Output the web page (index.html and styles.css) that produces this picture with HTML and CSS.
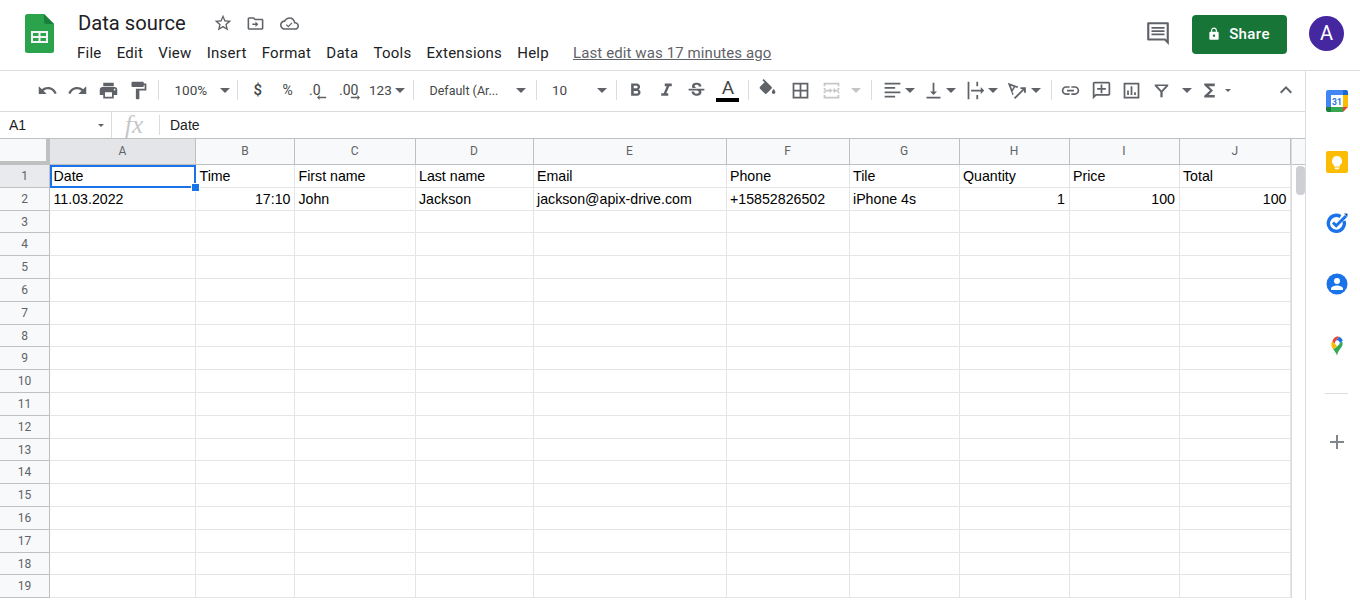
FILE: index.html
```html
<!DOCTYPE html>
<html lang="en">
  <head>
    <meta charset="UTF-8" />
    <title>Data source</title>
    <link rel="stylesheet" href="styles.css">
  </head>
  <body>
    <div class="app">
      <header class="topbar">
        <svg class="logo" viewBox="0 0 29 39">
          <path fill="#2ba24c" d="M2.5 0H19l10 10v26.5a2.500 2.500 0 0 1-2.500 2.500h-24A2.500 2.500 0 0 1 0 36.500v-34A2.500 2.500 0 0 1 2.500 0z"/>
          <path fill="#188038" d="M19 0l10 10H21.500A2.500 2.500 0 0 1 19 7.500z"/>
          <path fill="#f1f3f4" d="M6 17h17v12H6zm2 2v3h5.500v-3zm7.500 0v3H21v-3zM8 24v3h5.500v-3zm7.500 0v3H21v-3z" fill-rule="evenodd"/>
        </svg>
        <div class="doc">
          <div class="doc-title">
            <span class="title">Data source</span>
            <svg class="title-icon star" viewBox="0 0 24 24"><path d="M22 9.240l-7.190-.62L12 2 9.190 8.630 2 9.240l5.460 4.730L5.820 21 12 17.270 18.180 21l-1.630-7.030L22 9.240zM12 15.400l-3.760 2.270 1-4.280-3.320-2.880 4.380-.38L12 6.100l1.710 4.040 4.380.38-3.320 2.880 1 4.280L12 15.400z"/></svg>
            <svg class="title-icon" viewBox="0 0 24 24"><path d="M20 6h-8l-2-2H4c-1.100 0-2 .9-2 2v12c0 1.100.9 2 2 2h16c1.100 0 2-.9 2-2V8c0-1.100-.9-2-2-2zm0 12H4V6h5.170l2 2H20v10zm-8-4H8v-2h4V9.500l3.500 3.500-3.500 3.500V14z"/></svg>
            <svg class="title-icon" viewBox="0 0 24 24"><path d="M19.350 10.040C18.670 6.590 15.640 4 12 4 9.110 4 6.600 5.640 5.350 8.040 2.340 8.360 0 10.910 0 14c0 3.310 2.690 6 6 6h13c2.760 0 5-2.240 5-5 0-2.640-2.050-4.780-4.650-4.960zM19 18H6c-2.210 0-4-1.790-4-4 0-2.050 1.530-3.760 3.560-3.970l1.070-.11.5-.95C8.080 7.140 9.940 6 12 6c2.620 0 4.880 1.860 5.390 4.430l.3 1.500 1.530.11c1.560.1 2.780 1.410 2.780 2.960 0 1.650-1.350 3-3 3zm-8.500-3.200l-2-2-1.100 1.100 3.100 3.100 5.200-5.200-1.100-1.100z"/></svg>
          </div>
          <nav class="menu">
            <span>File</span>
            <span>Edit</span>
            <span>View</span>
            <span>Insert</span>
            <span>Format</span>
            <span>Data</span>
            <span>Tools</span>
            <span>Extensions</span>
            <span>Help</span>
            <a class="last-edit">Last edit was 17 minutes ago</a>
          </nav>
        </div>
        <svg class="comments" viewBox="0 0 24 24"><path d="M21 2H3a1 1 0 0 0-1 1v15a1 1 0 0 0 1 1h15l4 4V3a1 1 0 0 0-1-1zm-1 16.200L18.800 17H4V4h16zM6 6.500h12V8H6zm0 3h12V11H6zm0 3h12V14H6z"/></svg>
        <button class="share">
          <svg viewBox="0 0 24 24"><path d="M18 8h-1V6c0-2.760-2.240-5-5-5S7 3.240 7 6v2H6c-1.100 0-2 .9-2 2v10c0 1.100.9 2 2 2h12c1.100 0 2-.9 2-2V10c0-1.100-.9-2-2-2zm-6 9c-1.100 0-2-.9-2-2s.9-2 2-2 2 .9 2 2-.9 2-2 2zm3.100-9H8.900V6c0-1.710 1.390-3.100 3.100-3.100 1.710 0 3.100 1.390 3.100 3.100v2z"/></svg>
          Share
        </button>
        <div class="avatar">A</div>
      </header>

      <div class="workspace">
        <main class="main">
          <div class="toolbar">
            <span class="tb"><svg viewBox="0 0 24 24"><path d="M12.500 8c-2.650 0-5.050.99-6.900 2.600L2 7v9h9l-3.620-3.620c1.390-1.160 3.160-1.880 5.120-1.880 3.540 0 6.550 2.310 7.600 5.500l2.370-.78C21.080 11.030 17.150 8 12.500 8z"/></svg></span>
            <span class="tb"><svg viewBox="0 0 24 24"><path d="M18.400 10.600C16.550 8.990 14.150 8 11.500 8c-4.650 0-8.580 3.030-9.960 7.220L3.900 16c1.050-3.190 4.050-5.500 7.600-5.500 1.950 0 3.730.72 5.120 1.880L13 16h9V7l-3.600 3.600z"/></svg></span>
            <span class="tb"><svg viewBox="0 0 24 24"><path d="M19 8H5c-1.660 0-3 1.340-3 3v6h4v4h12v-4h4v-6c0-1.660-1.340-3-3-3zm-3 11H8v-5h8v5zm3-7c-.55 0-1-.45-1-1s.45-1 1-1 1 .45 1 1-.45 1-1 1zm-1-9H6v4h12V3z"/></svg></span>
            <span class="tb"><svg viewBox="0 0 24 24"><path d="M18 4V3c0-.55-.45-1-1-1H5c-.55 0-1 .45-1 1v4c0 .55.45 1 1 1h12c.55 0 1-.45 1-1V6h1v4H9v11c0 .55.45 1 1 1h2c.55 0 1-.45 1-1v-9h8V4h-3z"/></svg></span>
            <i class="sep"></i>
            <span class="select select-zoom">100%<b class="caret"></b></span>
            <i class="sep"></i>
            <span class="tb tb-text tb-strong">$</span>
            <span class="tb tb-text">%</span>
            <span class="tb decimal decimal-less">.0<svg viewBox="0 0 12 6"><path d="M0 3l3-3v2h8v2H3v2z"/></svg></span>
            <span class="tb decimal decimal-more">.00<svg viewBox="0 0 12 6"><path d="M12 3L9 0v2H1v2h8v2z"/></svg></span>
            <span class="tb tb-number">123<b class="caret"></b></span>
            <i class="sep"></i>
            <span class="select select-font">Default (Ar...<b class="caret"></b></span>
            <i class="sep"></i>
            <span class="select select-size">10<b class="caret"></b></span>
            <i class="sep"></i>
            <span class="tb"><svg viewBox="0 0 24 24"><path d="M15.600 10.790c.97-.67 1.650-1.770 1.650-2.790 0-2.260-1.750-4-4-4H7v14h7.040c2.090 0 3.710-1.700 3.710-3.790 0-1.520-.86-2.820-2.150-3.420zM10 6.500h3c.83 0 1.500.67 1.500 1.500s-.67 1.500-1.500 1.500h-3v-3zm3.500 9H10v-3h3.500c.83 0 1.500.67 1.500 1.500s-.67 1.500-1.500 1.500z"/></svg></span>
            <span class="tb"><svg viewBox="0 0 24 24"><path d="M10 4v3h2.210l-3.420 8H6v3h8v-3h-2.210l3.420-8H18V4z"/></svg></span>
            <span class="tb"><svg viewBox="0 0 24 24"><path d="M7.240 8.750c-.26-.48-.39-1.030-.39-1.670 0-.61.13-1.160.4-1.670.26-.5.63-.93 1.110-1.290.48-.35 1.050-.63 1.700-.83.66-.19 1.390-.29 2.180-.29.81 0 1.540.11 2.210.34.66.22 1.230.54 1.690.94.47.4.83.88 1.080 1.430.25.55.38 1.150.38 1.810h-3.010c0-.31-.05-.59-.15-.85-.09-.27-.24-.49-.44-.68-.2-.19-.45-.33-.75-.44-.3-.1-.66-.16-1.060-.16-.39 0-.74.04-1.030.13-.29.09-.53.21-.72.36-.19.16-.34.34-.44.55-.1.21-.15.43-.15.66 0 .48.25.88.74 1.210.38.25.77.48 1.410.7H7.390c-.05-.08-.11-.17-.15-.25zM21 12v-2H3v2h9.620c.18.07.4.14.55.2.37.17.66.34.87.51.21.17.35.36.43.57.07.2.11.43.11.69 0 .23-.05.45-.14.66-.09.2-.23.38-.42.53-.19.15-.42.26-.71.35-.29.08-.63.13-1.010.13-.43 0-.83-.04-1.180-.13s-.66-.23-.91-.42c-.25-.19-.45-.44-.59-.75-.14-.31-.25-.76-.25-1.210H6.400c0 .55.08 1.130.24 1.580.16.45.37.85.65 1.210.28.35.6.66.98.92.37.26.78.48 1.220.65.44.17.9.3 1.380.39.48.08.96.13 1.440.13.8 0 1.530-.09 2.180-.28s1.210-.45 1.670-.79c.46-.34.82-.77 1.070-1.270s.38-1.070.38-1.710c0-.6-.1-1.140-.31-1.610-.05-.11-.11-.23-.17-.33H21z"/></svg></span>
            <span class="tb text-color"><span class="text-color-a">A</span><i class="text-color-bar"></i></span>
            <i class="sep"></i>
            <span class="tb tb-fill"><svg viewBox="0 0 24 24"><path d="M16.560 8.940L7.620 0 6.210 1.410l2.380 2.380-5.150 5.150c-.59.59-.59 1.540 0 2.120l5.500 5.500c.29.29.68.44 1.060.44s.77-.15 1.060-.44l5.500-5.500c.59-.58.59-1.530 0-2.120zM19 11.500s-2 2.170-2 3.500c0 1.100.9 2 2 2s2-.9 2-2c0-1.330-2-3.500-2-3.500z"/></svg></span>
            <span class="tb"><svg viewBox="0 0 24 24"><path d="M3 3v18h18V3H3zm8 16H5v-6h6v6zm0-8H5V5h6v6zm8 8h-6v-6h6v6zm0-8h-6V5h6v6z"/></svg></span>
            <span class="tb tb-merge">
              <svg class="muted" viewBox="0 0 24 24"><path d="M3 3h18v4h-2V5H5v2H3zm0 14h2v2h14v-2h2v4H3zM3 9h2v2H3zm0 4h2v2H3zm16-4h2v2h-2zm0 4h2v2h-2zM4 11h6V9l3 3-3 3v-2H4zm16 0h-4V9l-3 3 3 3v-2h4z"/></svg>
              <b class="caret caret-muted"></b>
            </span>
            <i class="sep"></i>
            <span class="tb-drop"><svg viewBox="0 0 24 24"><path d="M3 3h18v2H3zm0 5h12v2H3zm0 5h18v2H3zm0 5h12v2H3z"/></svg><b class="caret"></b></span>
            <span class="tb-drop"><svg viewBox="0 0 24 24"><path d="M16 13h-3V3h-2v10H8l4 4 4-4zM4 19v2h16v-2H4z"/></svg><b class="caret"></b></span>
            <span class="tb-drop"><svg viewBox="0 0 24 24"><path d="M3 2h2v20H3zm10 0h2v5h-2zm0 15h2v5h-2zM7 11h11V8l4 4-4 4v-3H7z"/></svg><b class="caret"></b></span>
            <span class="tb-drop tb-drop-last"><svg viewBox="0 0 24 24"><path d="M2 3l12 4.500-1 1.700-2.600-1-3.200 5.400 1.500 2.200-1.100 1.800zm3.500 3.600l1.400 4.100 1.900-3.100zM9 20.300l10.100-10.100-2.600 0V8.300H22.700v6.200h-2.200l0-2.700L10.500 21.800z"/></svg><b class="caret"></b></span>
            <i class="sep"></i>
            <span class="tb"><svg viewBox="0 0 24 24"><path d="M3.900 12c0-1.710 1.390-3.100 3.100-3.100h4V7H7c-2.760 0-5 2.240-5 5s2.240 5 5 5h4v-1.900H7c-1.710 0-3.100-1.390-3.100-3.100zM8 13h8v-2H8v2zm9-6h-4v1.900h4c1.710 0 3.100 1.390 3.100 3.100s-1.390 3.100-3.100 3.100h-4V17h4c2.760 0 5-2.240 5-5s-2.240-5-5-5z"/></svg></span>
            <span class="tb"><svg viewBox="0 0 24 24"><path d="M20 2H4c-1.100 0-2 .9-2 2v18l4-4h14c1.100 0 2-.9 2-2V4c0-1.100-.9-2-2-2zm0 14H5.170L4 17.170V4h16v12zM13 5h-2v4H7v2h4v4h2v-4h4V9h-4z"/></svg></span>
            <span class="tb"><svg viewBox="0 0 24 24"><path d="M3 3v18h18V3H3zm16 16H5V5h14v14zM7 12h2v5H7zm4-5h2v10h-2zm4 7h2v3h-2z"/></svg></span>
            <span class="tb-drop tb-filter"><svg viewBox="-2 -2 28 28"><path d="M3 4h18v2l-7.500 8v7h-3v-7L3 6zm3.500 2l5.500 6 5.500-6z"/></svg><b class="caret"></b></span>
            <span class="tb-drop tb-sum"><svg viewBox="0 0 24 24"><path d="M18 4H6v2l6.500 6L6 18v2h12v-3h-7l5-5-5-5h7z"/></svg><b class="caret caret-small"></b></span>
            <span class="tb tb-collapse"><svg viewBox="0 0 24 24"><path d="M12 8l-6 6 1.410 1.410L12 10.830l4.590 4.580L18 14z"/></svg></span>
          </div>

          <div class="formula-bar">
            <span class="name-box">A1<b class="caret caret-small"></b></span>
            <span class="fx">fx</span>
            <span class="formula">Date</span>
          </div>

          <div class="sheet">
            <div class="cells">
              <div class="row col-head">
                <div class="corner"></div>
                <div class="active">A</div><div>B</div><div>C</div><div>D</div><div>E</div><div>F</div><div>G</div><div>H</div><div>I</div><div>J</div>
              </div>
              <div class="row">
                <div class="row-num active">1</div>
                <div>Date</div><div>Time</div><div>First name</div><div>Last name</div><div>Email</div><div>Phone</div><div>Tile</div><div>Quantity</div><div>Price</div><div>Total</div>
              </div>
              <div class="row">
                <div class="row-num">2</div>
                <div>11.03.2022</div><div class="num">17:10</div><div>John</div><div>Jackson</div><div>jackson@apix-drive.com</div><div>+15852826502</div><div>iPhone 4s</div><div class="num">1</div><div class="num">100</div><div class="num">100</div>
              </div>
              <div class="row"><div class="row-num">3</div><div></div><div></div><div></div><div></div><div></div><div></div><div></div><div></div><div></div><div></div></div>
              <div class="row"><div class="row-num">4</div><div></div><div></div><div></div><div></div><div></div><div></div><div></div><div></div><div></div><div></div></div>
              <div class="row"><div class="row-num">5</div><div></div><div></div><div></div><div></div><div></div><div></div><div></div><div></div><div></div><div></div></div>
              <div class="row"><div class="row-num">6</div><div></div><div></div><div></div><div></div><div></div><div></div><div></div><div></div><div></div><div></div></div>
              <div class="row"><div class="row-num">7</div><div></div><div></div><div></div><div></div><div></div><div></div><div></div><div></div><div></div><div></div></div>
              <div class="row"><div class="row-num">8</div><div></div><div></div><div></div><div></div><div></div><div></div><div></div><div></div><div></div><div></div></div>
              <div class="row"><div class="row-num">9</div><div></div><div></div><div></div><div></div><div></div><div></div><div></div><div></div><div></div><div></div></div>
              <div class="row"><div class="row-num">10</div><div></div><div></div><div></div><div></div><div></div><div></div><div></div><div></div><div></div><div></div></div>
              <div class="row"><div class="row-num">11</div><div></div><div></div><div></div><div></div><div></div><div></div><div></div><div></div><div></div><div></div></div>
              <div class="row"><div class="row-num">12</div><div></div><div></div><div></div><div></div><div></div><div></div><div></div><div></div><div></div><div></div></div>
              <div class="row"><div class="row-num">13</div><div></div><div></div><div></div><div></div><div></div><div></div><div></div><div></div><div></div><div></div></div>
              <div class="row"><div class="row-num">14</div><div></div><div></div><div></div><div></div><div></div><div></div><div></div><div></div><div></div><div></div></div>
              <div class="row"><div class="row-num">15</div><div></div><div></div><div></div><div></div><div></div><div></div><div></div><div></div><div></div><div></div></div>
              <div class="row"><div class="row-num">16</div><div></div><div></div><div></div><div></div><div></div><div></div><div></div><div></div><div></div><div></div></div>
              <div class="row"><div class="row-num">17</div><div></div><div></div><div></div><div></div><div></div><div></div><div></div><div></div><div></div><div></div></div>
              <div class="row"><div class="row-num">18</div><div></div><div></div><div></div><div></div><div></div><div></div><div></div><div></div><div></div><div></div></div>
              <div class="row"><div class="row-num">19</div><div></div><div></div><div></div><div></div><div></div><div></div><div></div><div></div><div></div><div></div></div>
              <div class="selection"><i class="handle"></i></div>
            </div>
            <div class="vscroll"><div class="vscroll-head"></div><div class="thumb"></div></div>
          </div>
        </main>

        <aside class="side">
          <svg class="side-icon" viewBox="0 0 22 22">
            <path fill="#fff" d="M5 5h12v12H5z"/>
            <path fill="#4285f4" d="M2 0h15v5H5v12H0V2a2 2 0 0 1 2-2z"/>
            <path fill="#1967d2" d="M17 0h3a2 2 0 0 1 2 2v3h-5z"/>
            <path fill="#fbbc04" d="M17 5h5v12h-5z"/>
            <path fill="#34a853" d="M5 17h12v5H5z"/>
            <path fill="#188038" d="M0 17h5v5H2a2 2 0 0 1-2-2z"/>
            <path fill="#ea4335" d="M17 17h5l-5 5z"/>
            <text class="cal-text" x="11" y="14.500" text-anchor="middle">31</text>
          </svg>
          <svg class="side-icon" viewBox="0 0 22 22">
            <rect width="22" height="22" rx="2" fill="#fbbc04"/>
            <path fill="#fff" d="M11 5a5 5 0 0 0-3 9v1.500h6V14a5 5 0 0 0-3-9zM8.500 16.500h5a2.500 2 0 0 1-5 0z"/>
          </svg>
          <svg class="side-icon" viewBox="0 0 22 22">
            <path fill="none" stroke="#1a73e8" stroke-width="3.400" d="M18 9a8 8 0 1 1-3.500-4.500"/>
            <path fill="none" stroke="#1a73e8" stroke-width="3" d="M7 10.500l3.200 3.200L20 4"/>
            <path fill="#174ea6" d="M18 1.500h3.500V5z"/>
          </svg>
          <svg class="side-icon" viewBox="0 0 22 22">
            <circle cx="11" cy="11" r="10.500" fill="#1a73e8"/>
            <circle cx="11" cy="8" r="3" fill="#fff"/>
            <path fill="#fff" d="M5 15.500c0-2 4-3 6-3s6 1 6 3V17H5z"/>
          </svg>
          <svg class="side-icon" viewBox="0 0 22 22">
            <path fill="#34a853" d="M11 21.500c-1-3-2.600-4.600-3.800-6l3.800-3 5-5c.4.7.6 1.500.6 2.300 0 2.800-1.700 4-3 5.900-1 1.300-1.900 2.800-2.600 5.800z"/>
            <path fill="#fbbc04" d="M5.300 10c0 2.400 1 3.700 1.900 5.500L11 12l-4.600-4.800c-.7.800-1.100 1.800-1.100 2.800z"/>
            <path fill="#1a73e8" d="M13 2.800L9.800 6.800a2.500 2.500 0 0 1 3.600 3.300l3.400-3.700c-.7-1.700-2.100-3-3.800-3.600z"/>
            <path fill="#ea4335" d="M6.400 7.200l3.400 3.600a2.500 2.500 0 0 1 0-4l3.200-4C10.600 2 8 3.300 6.400 7.200z"/>
          </svg>
          <hr class="side-rule">
          <svg class="side-add" viewBox="0 0 14 14"><path d="M6 0h2v6h6v2H8v6H6V8H0V6h6z"/></svg>
        </aside>
      </div>
    </div>
  </body>
</html>
```

FILE: styles.css
```css
* {
  box-sizing: border-box;
}
html,
body {
  margin: 0;
  height: 600px;
  overflow: hidden;
  background: #fff;
}
body {
  font-family: Roboto, "Liberation Sans", sans-serif;
  color: #202124;
}
.app {
  display: flex;
  flex-direction: column;
  height: 600px;
}

/* top bar */
.topbar {
  display: flex;
  align-items: flex-start;
  height: 71px;
  flex: none;
  border-bottom: 1px solid #dadce0;
}
.logo {
  width: 29px;
  height: 39px;
  margin: 14px 0 0 25px;
  flex: none;
}
.doc {
  margin-left: 23px;
  flex: 1;
}
.doc-title {
  display: flex;
  align-items: center;
  height: 24px;
  margin-top: 11px;
  margin-left: 1px;
}
.title {
  font-size: 20.2px;
  line-height: 24px;
  width: 135px;
}
.title-icon {
  width: 19px;
  height: 19px;
  margin-right: 15px;
  fill: #5f6368;
}
.star {
  width: 20px;
  height: 20px;
  margin-right: 12.5px;
}
.menu {
  display: flex;
  gap: 15.1px;
  margin-top: 9px;
  font-size: 15px;
  letter-spacing: 0.25px;
  line-height: 18px;
}
.last-edit {
  margin-left: 9px;
  color: #5f6368;
  letter-spacing: 0.1px;
  text-decoration: underline;
}
.comments {
  width: 26px;
  height: 26px;
  margin: 20px 21px 0 0;
  fill: #5f6368;
}
.share {
  display: flex;
  align-items: center;
  justify-content: center;
  gap: 8px;
  width: 95px;
  height: 39px;
  margin-top: 15px;
  padding: 0 2px 2px 0;
  border: none;
  border-radius: 4px;
  background: #177537;
  color: #fff;
  font: 500 15px Roboto, sans-serif;
  letter-spacing: 0.4px;
}
.share svg {
  width: 14px;
  height: 14px;
  fill: #fff;
}
.avatar {
  width: 35px;
  height: 35px;
  margin: 16px 16px 0 22px;
  border-radius: 50%;
  background: #4527a0;
  color: #fff;
  font-size: 20px;
  line-height: 35px;
  text-align: center;
}

.workspace {
  display: flex;
  flex: 1;
  min-height: 0;
}
.main {
  width: 1305px;
  flex: none;
}

/* toolbar */
.toolbar {
  display: flex;
  align-items: center;
  height: 41px;
  padding: 0 0 2px 32px;
  border-bottom: 1px solid #dadce0;
  color: #444746;
  font-size: 13px;
}
.toolbar svg {
  width: 21px;
  height: 21px;
  fill: #5f6368;
  flex: none;
}
.tb {
  display: flex;
  align-items: center;
  justify-content: center;
  width: 30.5px;
  height: 28px;
  flex: none;
}
.tb-text {
  font-size: 14px;
}
.tb-strong {
  font-weight: 500;
  font-size: 15px;
  padding-left: 1px;
}
.decimal {
  position: relative;
  font-size: 14px;
}
.decimal-less {
  padding-right: 7px;
}
.toolbar .decimal svg {
  position: absolute;
  width: 10px;
  height: 5px;
  bottom: 4px;
}
.toolbar .decimal-less svg {
  left: 14px;
}
.toolbar .decimal-more svg {
  left: 16px;
}
.tb-number {
  width: 45px;
  justify-content: flex-start;
  padding-left: 5px;
  gap: 3px;
  font-size: 13.5px;
}
.sep {
  width: 1px;
  height: 20px;
  margin: 0 4px 0 3.5px;
  background: #dadce0;
  flex: none;
}
.caret {
  width: 0;
  height: 0;
  border-left: 5px solid transparent;
  border-right: 5px solid transparent;
  border-top: 5px solid #5f6368;
  flex: none;
}
.caret-small {
  border-width: 3.5px 3.5px 0;
}
.caret-muted {
  border-top-color: #c4c7ca;
}
.select {
  display: flex;
  align-items: center;
  justify-content: space-between;
  height: 28px;
  padding-right: 5px;
  flex: none;
}
.select-zoom {
  width: 71px;
  padding-left: 12px;
  padding-right: 4px;
}
.select-font {
  width: 115px;
  padding-left: 12px;
  padding-right: 7px;
  font-size: 12.5px;
}
.select-size {
  width: 71px;
  padding-left: 11px;
}
.select-size,
.select-zoom {
  font-size: 13.5px;
}
.text-color {
  position: relative;
  flex-direction: column;
  width: 32px;
}
.text-color-a {
  font-size: 19px;
  line-height: 19px;
  margin-top: -6px;
}
.text-color-bar {
  position: absolute;
  left: 4px;
  right: 5px;
  bottom: 2px;
  height: 4px;
  background: #000;
}
.tb-fill {
  width: 33px;
  padding-right: 3px;
}
.tb-fill svg {
  margin-top: -2px;
}
.toolbar .muted {
  fill: #c4c7ca;
}
.tb-merge {
  width: 51px;
  justify-content: flex-start;
  gap: 9px;
  padding-left: 5px;
}
.tb-drop {
  display: flex;
  align-items: center;
  gap: 2px;
  width: 41.5px;
  height: 28px;
  padding-left: 6px;
  flex: none;
}
.tb-drop-last {
  width: 47px;
  padding-left: 6px;
  gap: 4px;
}
.tb-filter {
  width: 51px;
  padding-left: 4px;
  gap: 10px;
}
.tb-sum {
  width: 50px;
  padding-left: 1px;
  gap: 5px;
}
.tb-collapse {
  margin-left: auto;
  margin-right: 4px;
}
.toolbar .tb-collapse svg {
  width: 24px;
  height: 24px;
}

/* formula bar */
.formula-bar {
  display: flex;
  align-items: center;
  height: 27px;
  border-bottom: 1px solid #c0c0c0;
  font: 14px "Liberation Sans", sans-serif;
  color: #202124;
}
.name-box {
  display: flex;
  align-items: center;
  justify-content: space-between;
  width: 112px;
  height: 100%;
  padding: 0 7px 0 9px;
  border-right: 1px solid #dadce0;
}
.fx {
  width: 48px;
  height: 20px;
  padding-left: 13px;
  border-right: 1px solid #dadce0;
  color: #c4c7ca;
  font: italic 25px/20px "Liberation Serif", serif;
}
.formula {
  padding-left: 10px;
}

/* grid */
.sheet {
  display: flex;
}
.cells {
  position: relative;
  width: 1291px;
  flex: none;
}
.row {
  display: grid;
  grid-template-columns: 50px 146px 99px 120.5px 118px 193px 123px 110px 110px 110px 111.5px;
  height: 22.8px;
  font: 14.2px/22px "Liberation Sans", Arial, sans-serif;
  color: #000;
}
.row > div {
  padding: 0 3.5px;
  border-right: 1px solid #e4e5e6;
  border-bottom: 1px solid #e4e5e6;
  white-space: nowrap;
  overflow: hidden;
}
.row > .num {
  padding-right: 3.5px;
  text-align: right;
}
.row > .row-num {
  padding: 0;
  background: #f8f9fa;
  border-right: 1px solid #c0c0c0;
  border-bottom-color: #c0c0c0;
  color: #5f6368;
  font: 12px/22px Roboto, sans-serif;
  text-align: center;
}
.col-head {
  height: 26px;
}
.row.col-head > div {
  background: #f8f9fa;
  padding: 0;
  border-right-color: #c0c0c0;
  border-bottom-color: #c0c0c0;
  color: #5f6368;
  font: 12px/25px Roboto, sans-serif;
  text-align: center;
}
.row.col-head > .corner {
  border-right: 4px solid #c0c0c0;
  border-bottom: 4px solid #c0c0c0;
  background: #f8f9fa;
}
.row.col-head > .active {
  background: #e3e5e8;
}
.row > .row-num.active {
  background: #e8eaed;
}
.selection {
  position: absolute;
  left: 50px;
  top: 26px;
  width: 146px;
  height: 23px;
  border: 2px solid #1a73e8;
}
.handle {
  position: absolute;
  right: -5px;
  bottom: -5px;
  width: 7px;
  height: 7px;
  background: #1a73e8;
  border: 1px solid #fff;
  box-sizing: content-box;
  margin: -1px;
}
.vscroll {
  position: relative;
  width: 14px;
  flex: none;
  border-left: 1px solid #dadce0;
}
.vscroll-head {
  height: 26px;
  background: #f8f9fa;
  border-bottom: 1px solid #c0c0c0;
}
.thumb {
  width: 9px;
  height: 29px;
  margin: 1px 0 0 4px;
  border-radius: 4px;
  background: #cdcfd4;
}

/* side panel */
.side {
  display: flex;
  flex-direction: column;
  align-items: center;
  flex: 1;
  padding: 19px 0 0 7px;
  border-left: 1px solid #dadce0;
}
.side-icon {
  width: 22px;
  height: 22px;
  margin-bottom: 39px;
  flex: none;
}
.cal-text {
  font: 700 8.5px Roboto, sans-serif;
  fill: #1a73e8;
}
.side-rule {
  width: 23px;
  margin: -2px 0 0;
  border: none;
  border-top: 1px solid #dadce0;
}
.side-add {
  width: 14px;
  height: 14px;
  margin-top: 41px;
  fill: #80868b;
}
```
